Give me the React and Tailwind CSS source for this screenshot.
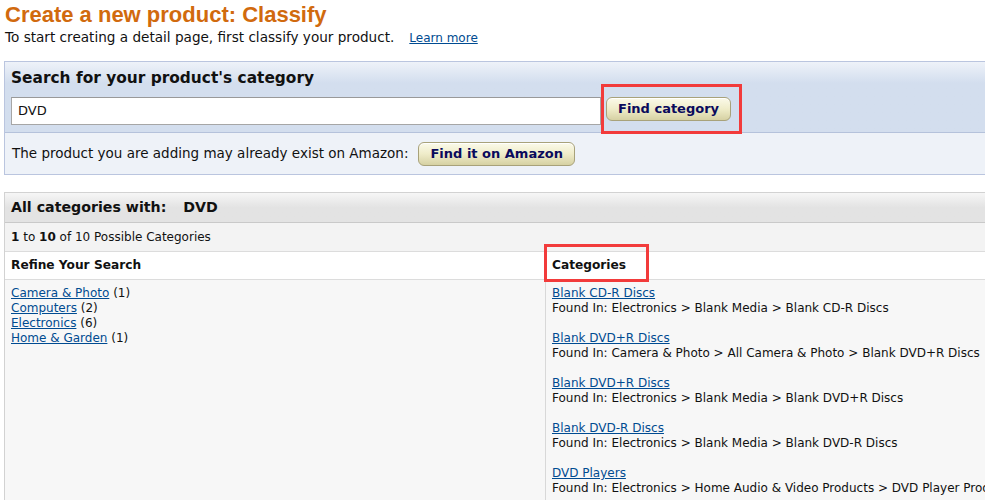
import React from "react";

const Btn = ({ children, className = "" }) => (
  <button
    className={
      "h-[24px] shrink-0 rounded-[6px] border border-[#a8a27a] bg-gradient-to-b from-[#fbfaea] via-[#efecc9] to-[#d6d1a3] px-[11px] text-[13px] font-bold leading-[20px] text-[#0a0a5c] shadow-[inset_0_1px_0_#fff] font-['DejaVu_Sans',sans-serif] " +
      className
    }
  >
    {children}
  </button>
);

const refine = [
  ["Camera & Photo", "(1)"],
  ["Computers", "(2)"],
  ["Electronics", "(6)"],
  ["Home & Garden", "(1)"],
];

const cats = [
  ["Blank CD-R Discs", "Electronics > Blank Media > Blank CD-R Discs"],
  ["Blank DVD+R Discs", "Camera & Photo > All Camera & Photo > Blank DVD+R Discs"],
  ["Blank DVD+R Discs", "Electronics > Blank Media > Blank DVD+R Discs"],
  ["Blank DVD-R Discs", "Electronics > Blank Media > Blank DVD-R Discs"],
  ["DVD Players", "Electronics > Home Audio & Video Products > DVD Player Products"],
];

export default function App() {
  return (
    <div className="relative h-[500px] w-[985px] overflow-hidden bg-white font-['DejaVu_Sans',sans-serif] text-[13px] text-[#111]">
      <h1 className="pl-[5px] pt-[3px] font-['Liberation_Sans',Arial,sans-serif] text-[22px] font-bold leading-[24px] text-[#d16a0e]">
        Create a new product: Classify
      </h1>
      <p className="pl-[5px] pt-[2px] text-[13.6px] leading-[16px]">
        To start creating a detail page, first classify your product.
        <a className="ml-[15px] text-[12px] text-[#004b91] underline" href="#">
          Learn more
        </a>
      </p>

      {/* Search panel */}
      <div className="ml-[4px] mt-[15px] w-[1000px] border border-r-0 border-[#bac5df]">
        <div className="bg-gradient-to-b from-[#eef2f9] to-[#d3deee] to-[30%] pb-[7px] pl-[6px]">
          <div className="pt-[6px] pb-[9px] text-[15.4px] font-bold leading-[20px] text-[#111]">
            Search for your product's category
          </div>
          <div className="flex items-start gap-[5px]">
            <div className="flex h-[28px] w-[590px] shrink-0 items-center border border-[#a6a6a6] border-t-[#999] bg-white pl-[6px] text-[13px]">
              DVD
            </div>
            <Btn>Find category</Btn>
          </div>
        </div>
        <div className="flex h-[42px] items-center gap-[10px] border-t border-[#b5c2db] bg-[#eef2f8] pl-[7px] text-[13.5px]">
          <span>The product you are adding may already exist on Amazon:</span>
          <Btn>Find it on Amazon</Btn>
        </div>
      </div>

      {/* Results */}
      <div className="ml-[4px] mt-[17px] w-[1000px] border-l border-t border-[#d2d2d2]">
        <div className="flex h-[30px] items-center border-b border-[#c9c9c9] bg-gradient-to-b from-[#f6f6f6] to-[#e3e3e3] to-[50%] pl-[6px] text-[14.2px] font-bold">
          All categories with:<span className="ml-[17px]">DVD</span>
        </div>
        <div className="flex h-[29px] items-center border-b border-[#dcdcdc] bg-[#f3f3f3] pl-[6px] text-[12px]">
          <b>1</b>&nbsp;to&nbsp;<b>10</b>&nbsp;of 10 Possible Categories
        </div>
        <div className="flex h-[28px] items-center border-b border-[#dcdcdc] bg-white text-[12.2px] font-bold">
          <div className="w-[540px] shrink-0 pl-[6px]">Refine Your Search</div>
          <div className="pl-[7px]">Categories</div>
        </div>
        <div className="flex h-[300px] bg-[#f7f7f7] text-[12px] leading-[15px]">
          <div className="w-[540px] shrink-0 pl-[6px] pt-[6px]">
            {refine.map(([n, c]) => (
              <div key={n}>
                <a href="#" className="text-[#004b91] underline">{n}</a> {c}
              </div>
            ))}
          </div>
          <div className="min-w-0 flex-1 border-l border-[#d8d8d8] pl-[6px] pt-[6px]">
            {cats.map(([n, p], i) => (
              <div key={i} className="mb-[15px]">
                <a href="#" className="text-[#004b91] underline">{n}</a>
                <div className="whitespace-nowrap">Found In: {p}</div>
              </div>
            ))}
          </div>
        </div>
      </div>

      {/* Annotation boxes */}
      <div className="absolute left-[601px] top-[84px] h-[50px] w-[141px] border-[3px] border-[#f23b3b]" />
      <div className="absolute left-[544px] top-[244px] h-[38px] w-[105px] border-[3px] border-[#f23b3b]" />
    </div>
  );
}
